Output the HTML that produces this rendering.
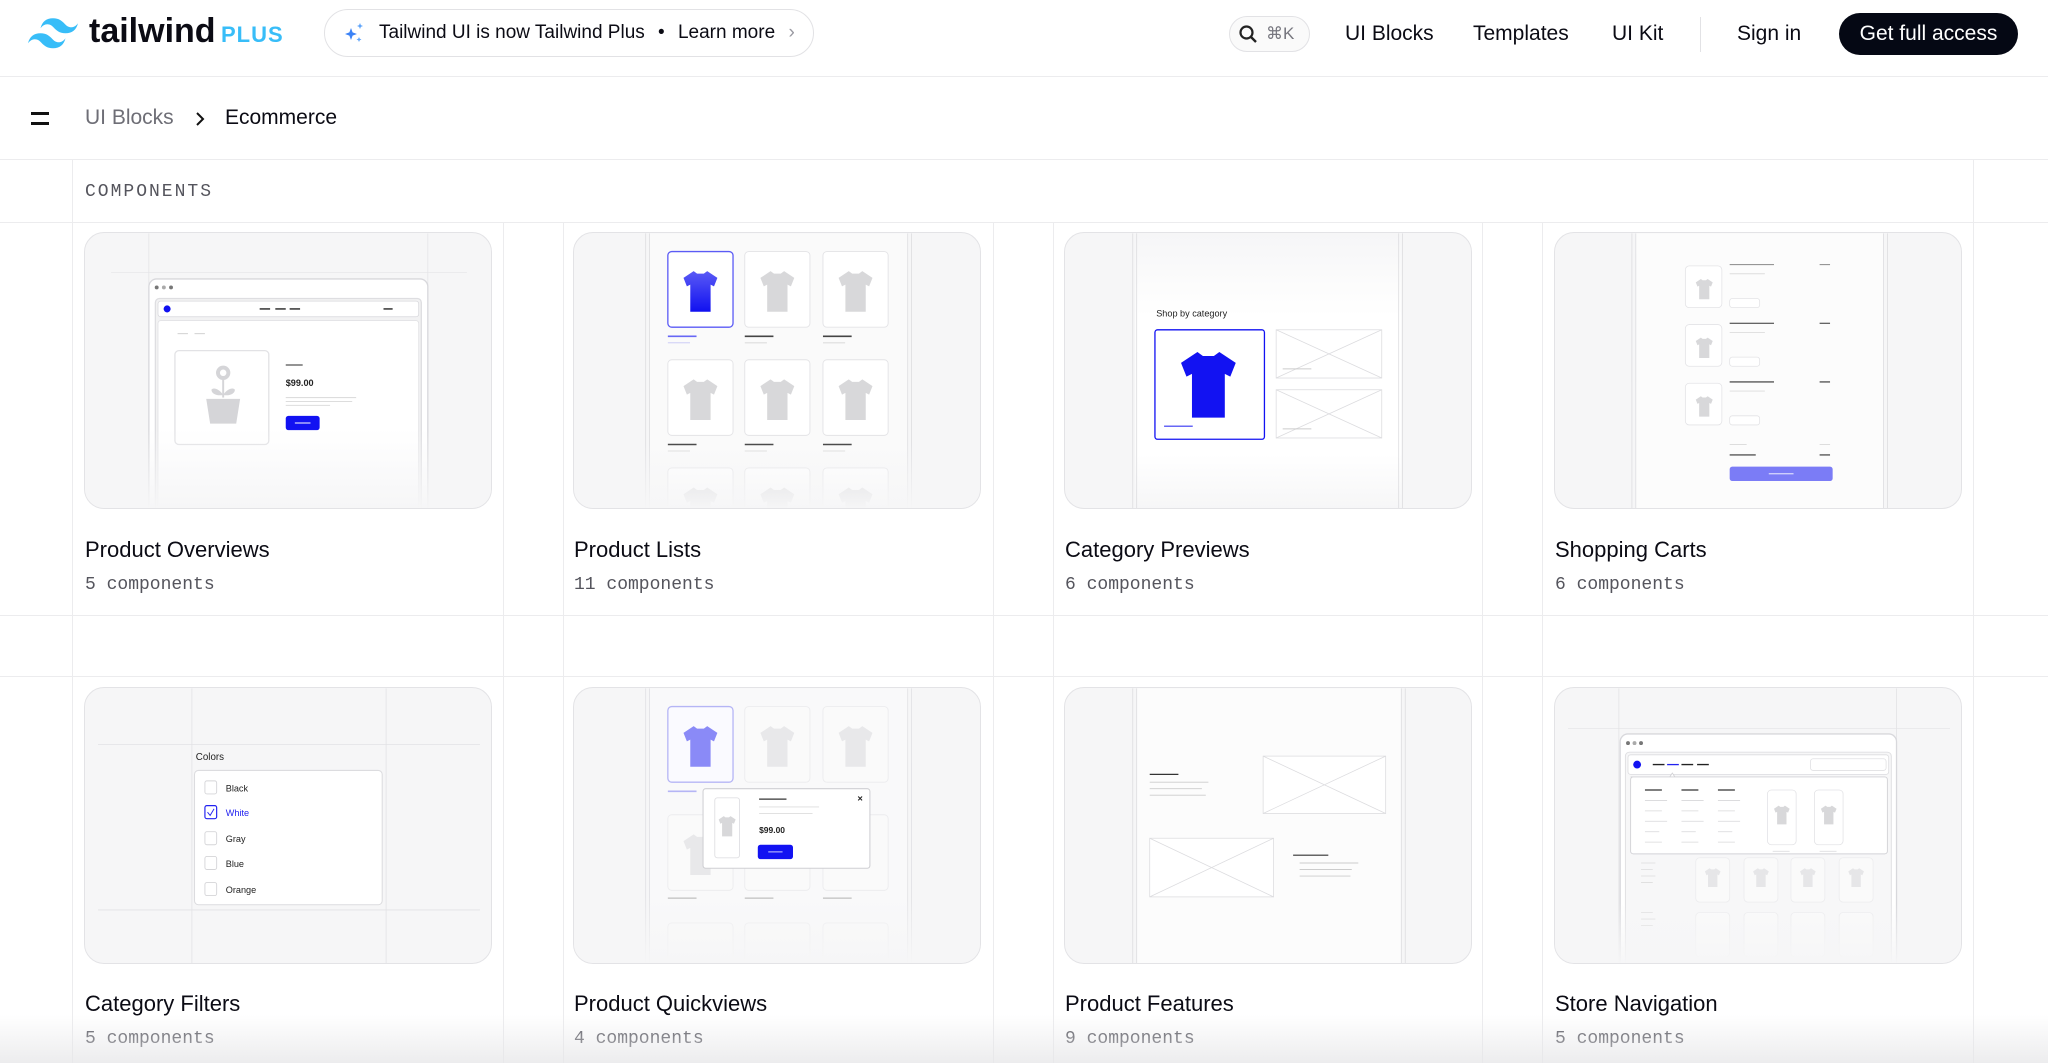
<!DOCTYPE html>
<html><head><meta charset="utf-8">
<style>
*{box-sizing:border-box;margin:0;padding:0}
html,body{width:2048px;height:1063px;overflow:hidden;background:#fff;font-family:"Liberation Sans",sans-serif;color:#0b0b14}
.a{position:absolute}
.hl{position:absolute;left:0;width:2048px;height:1px;background:#ececee}
.vl{position:absolute;width:1px;background:#ececee}
.card{position:absolute;width:408px;height:277px;border:1px solid #e3e3e6;border-radius:20px;background:#f6f6f7;overflow:hidden}
.card svg{position:absolute;left:0;top:0}
.t{position:absolute;font-size:22px;color:#0b0b14}
.c{position:absolute;font-family:"Liberation Mono",monospace;font-size:18px;color:#55555d}
.nav{position:absolute;top:22px;font-size:21px;color:#0b0b14}
</style></head><body>

<!-- header -->
<svg class="a" style="left:28px;top:18px" width="50" height="31" viewBox="0 0 54 33"><path fill="#38bdf8" d="M27 0c-7.2 0-11.7 3.6-13.5 10.8 2.7-3.6 5.850-4.950 9.45-4.05 2.054.513 3.522 2.004 5.147 3.653C30.744 13.09 33.808 16.2 40.5 16.2c7.2 0 11.7-3.6 13.5-10.8-2.7 3.6-5.85 4.95-9.45 4.05-2.054-.513-3.522-2.004-5.147-3.653C36.756 3.11 33.692 0 27 0zM13.5 16.2C6.3 16.2 1.8 19.8 0 27c2.7-3.6 5.85-4.95 9.45-4.05 2.054.514 3.522 2.004 5.147 3.653C17.244 29.29 20.308 32.4 27 32.4c7.2 0 11.7-3.6 13.5-10.8-2.7 3.6-5.85 4.95-9.45 4.05-2.054-.513-3.522-2.004-5.147-3.653C23.256 19.31 20.192 16.2 13.5 16.2z"/></svg>
<div class="a" style="left:89px;top:12px;font-size:34px;font-weight:bold;letter-spacing:0px;color:#0b0b14">tailwind</div>
<div class="a" style="left:221px;top:22px;font-size:22px;font-weight:bold;letter-spacing:1px;color:#38bdf8">PLUS</div>

<div class="a" style="left:324px;top:9px;width:490px;height:48px;border:1px solid #e2e2e5;border-radius:24px"></div>
<svg class="a" style="left:343px;top:22px" width="24" height="24" viewBox="0 0 24 24"><path fill="#3b82f6" d="M8 6l1.6 4.4L14 12l-4.4 1.6L8 18l-1.6-4.4L2 12l4.4-1.6z"/><path fill="#60a5fa" d="M17 1l.9 2.1L20 4l-2.1.9L17 7l-.9-2.1L14 4l2.1-.9z"/><path fill="#60a5fa" d="M16 15l.8 1.7 1.7.8-1.7.8L16 20l-.8-1.7-1.7-.8 1.7-.8z"/></svg>
<div class="a" style="left:379px;top:22px;font-size:19px;color:#0b0b14;white-space:nowrap">Tailwind UI is now Tailwind Plus <span style="margin:0 8px">•</span> Learn more <span style="color:#9a9aa2;margin-left:8px">›</span></div>

<div class="a" style="left:1229px;top:16px;width:81px;height:36px;border:1px solid #e2e2e5;border-radius:18px;background:#fafafa"></div>
<svg class="a" style="left:1238px;top:24px" width="20" height="20" viewBox="0 0 20 20"><circle cx="8.5" cy="8.5" r="6" fill="none" stroke="#222" stroke-width="2.2"/><path d="M13 13l5 5" stroke="#222" stroke-width="2.4"/></svg>
<div class="a" style="left:1266px;top:24px;font-size:17px;color:#77777f">⌘K</div>
<div class="nav" style="left:1345px">UI Blocks</div>
<div class="nav" style="left:1473px">Templates</div>
<div class="nav" style="left:1612px">UI Kit</div>
<div class="vl" style="left:1700px;top:17px;height:35px;background:#e2e2e5"></div>
<div class="nav" style="left:1737px">Sign in</div>
<div class="a" style="left:1839px;top:13px;width:179px;height:42px;border-radius:21px;background:#050814;color:#fff;font-size:21px;text-align:center;line-height:42px">Get full access</div>
<div class="hl" style="top:76px"></div>

<!-- breadcrumb -->
<div class="a" style="left:31px;top:112px;width:18px;height:2.5px;background:#111"></div>
<div class="a" style="left:31px;top:122px;width:18px;height:2.5px;background:#111"></div>
<div class="a" style="left:85px;top:106px;font-size:21px;color:#6e6e76">UI Blocks</div>
<svg class="a" style="left:194px;top:111px" width="12" height="16" viewBox="0 0 12 16"><path d="M3 2l6 6-6 6" fill="none" stroke="#111" stroke-width="2"/></svg>
<div class="a" style="left:225px;top:106px;font-size:21px;color:#0b0b14">Ecommerce</div>
<div class="hl" style="top:159px"></div>

<div class="a" style="left:85px;top:182px;font-family:'Liberation Mono',monospace;font-size:18px;letter-spacing:2px;color:#55555d">COMPONENTS</div>
<div class="hl" style="top:222px"></div>
<div class="hl" style="top:615px"></div>
<div class="hl" style="top:676px"></div>

<div class="vl" style="left:72px;top:159px;height:904px"></div>
<div class="vl" style="left:503px;top:222px;height:841px"></div>
<div class="vl" style="left:563px;top:222px;height:841px"></div>
<div class="vl" style="left:993px;top:222px;height:841px"></div>
<div class="vl" style="left:1053px;top:222px;height:841px"></div>
<div class="vl" style="left:1482px;top:222px;height:841px"></div>
<div class="vl" style="left:1542px;top:222px;height:841px"></div>
<div class="vl" style="left:1973px;top:159px;height:904px"></div>

<!-- Card 1: Product Overviews -->
<div class="card" style="left:84px;top:232px">
<svg width="408" height="277" viewBox="0 0 313 212">
<line x1="49" y1="0" x2="49" y2="212" stroke="#e4e4e7" stroke-width=".6"/><line x1="263" y1="0" x2="263" y2="212" stroke="#e4e4e7" stroke-width=".6"/>
<line x1="20" y1="30" x2="293" y2="30" stroke="#e4e4e7" stroke-width=".5"/>
<rect x="49" y="35" width="214" height="190" rx="6" fill="#fff" stroke="#d8d8dc"/>
<circle cx="55" cy="41.5" r="1.5" fill="#777"/><circle cx="60.5" cy="41.5" r="1.5" fill="#aaa"/><circle cx="66" cy="41.5" r="1.5" fill="#777"/>
<rect x="54" y="50" width="204" height="200" rx="3" fill="#f2f2f3" stroke="#dedee1"/>
<rect x="56" y="52" width="200" height="12" rx="2" fill="#fff" stroke="#d8d8dc" stroke-width=".6"/>
<circle cx="63" cy="58" r="2.7" fill="#1010f0"/>
<path d="M134 58h8M146 58h8M157 58h8M229 58h7" stroke="#222" stroke-width="1"/>
<rect x="56" y="67" width="200" height="160" rx="2" fill="#fff" stroke="#e0e0e3" stroke-width=".6"/>
<path d="M71 77h8M84 77h8" stroke="#ccc" stroke-width=".6"/>
<rect x="69" y="90" width="72" height="72" rx="3" fill="#fff" stroke="#e2e2e5"/>
<circle cx="106" cy="107" r="4" fill="none" stroke="#d5d5d8" stroke-width="3"/>
<path d="M106 112v14" stroke="#d5d5d8" stroke-width="1.5"/><path d="M106 124c-3-5-8-6-9-4 0 3 4 5 9 4zM106 124c3-5 8-6 9-4 0 3-4 5-9 4z" fill="#d5d5d8"/>
<path d="M93 127h26l-3 19h-20z" fill="#d5d5d8"/>
<path d="M154 101h13" stroke="#555" stroke-width="1"/>
<text x="154" y="117" font-family="Liberation Sans" font-weight="bold" font-size="7" fill="#222">$99.00</text>
<path d="M154 126h54M154 129h51M154 132h34" stroke="#ddd" stroke-width=".8"/>
<rect x="154" y="140" width="26" height="11" rx="2" fill="#1212f2"/><path d="M161 145.5h12" stroke="#fff" stroke-width=".8"/>
<rect x="0" y="150" width="313" height="62" fill="url(#f1)"/>
<defs><linearGradient id="f1" x1="0" y1="0" x2="0" y2="1"><stop offset="0" stop-color="#f6f6f7" stop-opacity="0"/><stop offset="1" stop-color="#f6f6f7"/></linearGradient></defs>
</svg></div>
<div class="t" style="left:85px;top:537px">Product Overviews</div>
<div class="c" style="left:85px;top:575px">5 components</div>

<!-- Card 2: Product Lists -->
<div class="card" style="left:573px;top:232px">
<svg width="408" height="277" viewBox="0 0 313 212">
<defs><linearGradient id="f2" x1="0" y1="0" x2="0" y2="1"><stop offset="0" stop-color="#f6f6f7" stop-opacity="0"/><stop offset="1" stop-color="#f6f6f7"/></linearGradient>
<linearGradient id="b2" x1="0" y1="0" x2="0" y2="1"><stop offset="0" stop-color="#5a5af5"/><stop offset="1" stop-color="#1010f0"/></linearGradient></defs>
<rect x="58" y="0" width="198" height="212" fill="#fafafa"/>
<path d="M55 0v212M58 0v212M256 0v212M259 0v212" stroke="#dcdcdf" stroke-width=".6"/>
<g stroke="#e3e3e6" fill="#fff" stroke-width=".7">
<rect x="131" y="14" width="50" height="58" rx="3"/><rect x="191" y="14" width="50" height="58" rx="3"/>
<rect x="72" y="97" width="50" height="58" rx="3"/><rect x="131" y="97" width="50" height="58" rx="3"/><rect x="191" y="97" width="50" height="58" rx="3"/>
<rect x="72" y="180" width="50" height="58" rx="3"/><rect x="131" y="180" width="50" height="58" rx="3"/><rect x="191" y="180" width="50" height="58" rx="3"/></g>
<rect x="72" y="14" width="50" height="58" rx="3" fill="#fff" stroke="#5b5bf5" stroke-width="1"/>
<path transform="translate(84,29) scale(1.3)" d="M6 0L8 1.5h4L14 0l6 4-2 5-2-1v16H4V8L2 9 0 4z" fill="url(#b2)"/>
<g fill="#d8d8da">
<path transform="translate(143,29) scale(1.3)" d="M6 0L8 1.5h4L14 0l6 4-2 5-2-1v16H4V8L2 9 0 4z"/>
<path transform="translate(203,29) scale(1.3)" d="M6 0L8 1.5h4L14 0l6 4-2 5-2-1v16H4V8L2 9 0 4z"/>
<path transform="translate(84,112) scale(1.3)" d="M6 0L8 1.5h4L14 0l6 4-2 5-2-1v16H4V8L2 9 0 4z"/>
<path transform="translate(143,112) scale(1.3)" d="M6 0L8 1.5h4L14 0l6 4-2 5-2-1v16H4V8L2 9 0 4z"/>
<path transform="translate(203,112) scale(1.3)" d="M6 0L8 1.5h4L14 0l6 4-2 5-2-1v16H4V8L2 9 0 4z"/>
<path transform="translate(84,195) scale(1.3)" d="M6 0L8 1.5h4L14 0l6 4-2 5-2-1v16H4V8L2 9 0 4z"/>
<path transform="translate(143,195) scale(1.3)" d="M6 0L8 1.5h4L14 0l6 4-2 5-2-1v16H4V8L2 9 0 4z"/>
<path transform="translate(203,195) scale(1.3)" d="M6 0L8 1.5h4L14 0l6 4-2 5-2-1v16H4V8L2 9 0 4z"/></g>
<path d="M72 79h22" stroke="#6767f5" stroke-width="1.2"/><path d="M72 84h17" stroke="#c5c5f5" stroke-width=".6"/>
<path d="M131 79h22M191 79h22M72 162h22M131 162h22M191 162h22" stroke="#444" stroke-width="1.2"/>
<path d="M131 84h17M191 84h17M72 167h17M131 167h17M191 167h17" stroke="#ddd" stroke-width=".8"/>
<rect x="0" y="160" width="313" height="52" fill="url(#f2)"/>
</svg></div>
<div class="t" style="left:574px;top:537px">Product Lists</div>
<div class="c" style="left:574px;top:575px">11 components</div>

<!-- Card 3: Category Previews -->
<div class="card" style="left:1064px;top:232px">
<svg width="408" height="277" viewBox="0 0 313 212">
<defs><linearGradient id="f3" x1="0" y1="0" x2="0" y2="1"><stop offset="0" stop-color="#f6f6f7"/><stop offset=".3" stop-color="#fff"/><stop offset=".8" stop-color="#fff"/><stop offset="1" stop-color="#f6f6f7"/></linearGradient></defs>
<rect x="54" y="0" width="204" height="212" fill="url(#f3)"/>
<path d="M52 0v212M55 0v212M256 0v212M259 0v212" stroke="#dcdcdf" stroke-width=".6"/>
<text x="70" y="64" font-family="Liberation Sans" font-size="7" fill="#222">Shop by category</text>
<rect x="69" y="74" width="84" height="84" rx="2" fill="#fff" stroke="#1212f2" stroke-width="1"/>
<path transform="translate(89,91) scale(2.1)" d="M6 0L8 1.5h4L14 0l6 4-2 5-2-1v16H4V8L2 9 0 4z" fill="#1212f2"/>
<path d="M76 148h22" stroke="#6767f5" stroke-width="1.2"/>
<g stroke="#dcdcdf" stroke-width=".6" fill="#fff"><rect x="162" y="74" width="81" height="37"/><rect x="162" y="120" width="81" height="37"/>
<path d="M162 74l81 37M243 74l-81 37M162 120l81 37M243 120l-81 37" fill="none"/></g>
<path d="M167 104h22M167 150h22" stroke="#ccc" stroke-width=".8"/>
</svg></div>
<div class="t" style="left:1065px;top:537px">Category Previews</div>
<div class="c" style="left:1065px;top:575px">6 components</div>

<!-- Card 4: Shopping Carts -->
<div class="card" style="left:1554px;top:232px">
<svg width="408" height="277" viewBox="0 0 313 212">
<rect x="62" y="0" width="190" height="212" fill="#fcfcfc"/>
<path d="M59 0v212M62 0v212M252 0v212M255 0v212" stroke="#dcdcdf" stroke-width=".6"/>
<g fill="#fff" stroke="#e3e3e6" stroke-width=".6">
<rect x="100" y="25" width="28" height="32" rx="3"/><rect x="100" y="70" width="28" height="32" rx="3"/><rect x="100" y="115" width="28" height="32" rx="3"/>
<rect x="134" y="50" width="23" height="7" rx="2"/><rect x="134" y="95" width="23" height="7" rx="2"/><rect x="134" y="140" width="23" height="7" rx="2"/></g>
<g fill="#d8d8da"><path transform="translate(108,35) scale(.65)" d="M6 0L8 1.5h4L14 0l6 4-2 5-2-1v16H4V8L2 9 0 4z"/><path transform="translate(108,80) scale(.65)" d="M6 0L8 1.5h4L14 0l6 4-2 5-2-1v16H4V8L2 9 0 4z"/><path transform="translate(108,125) scale(.65)" d="M6 0L8 1.5h4L14 0l6 4-2 5-2-1v16H4V8L2 9 0 4z"/></g>
<path d="M134 24h34M203 24h8" stroke="#888" stroke-width=".7"/>
<path d="M134 69h34M203 69h8M134 114h34M203 114h8M134 170h20M203 170h8" stroke="#333" stroke-width=".8"/>
<path d="M134 31h27M134 76h27M134 121h27M134 162h13M203 162h8" stroke="#ddd" stroke-width=".7"/>
<rect x="134" y="179" width="79" height="11" rx="2" fill="#7b7cf6"/><path d="M164 184.5h19" stroke="#fff" stroke-width=".7"/>
</svg></div>
<div class="t" style="left:1555px;top:537px">Shopping Carts</div>
<div class="c" style="left:1555px;top:575px">6 components</div>

<!-- Card 5: Category Filters -->
<div class="card" style="left:84px;top:687px">
<svg width="408" height="277" viewBox="0 0 313 212">
<path d="M82 0v212M231 0v212" stroke="#e2e2e5" stroke-width=".6"/><path d="M10 43h293M10 170h293" stroke="#e2e2e5" stroke-width=".6"/>
<text x="85" y="55" font-family="Liberation Sans" font-size="7.5" fill="#222">Colors</text>
<rect x="84" y="63" width="144" height="103" rx="3" fill="#fff" stroke="#dcdcdf" stroke-width=".8"/>
<g fill="#fff" stroke="#d5d5d8" stroke-width=".7"><rect x="92" y="71" width="9" height="10" rx="1.5"/><rect x="92" y="110" width="9" height="10" rx="1.5"/><rect x="92" y="129" width="9" height="10" rx="1.5"/><rect x="92" y="149" width="9" height="10" rx="1.5"/></g>
<rect x="92" y="90" width="9" height="10" rx="1.5" fill="#fff" stroke="#2222f0" stroke-width=".9"/><path d="M94 95l2 2.5 3-5" fill="none" stroke="#2222f0" stroke-width=".7"/>
<g font-family="Liberation Sans" font-size="7" fill="#222"><text x="108" y="79">Black</text><text x="108" y="98" fill="#2222f0">White</text><text x="108" y="118">Gray</text><text x="108" y="137">Blue</text><text x="108" y="157">Orange</text></g>
</svg></div>
<div class="t" style="left:85px;top:991px">Category Filters</div>
<div class="c" style="left:85px;top:1029px">5 components</div>

<!-- Card 6: Product Quickviews -->
<div class="card" style="left:573px;top:687px">
<svg width="408" height="277" viewBox="0 0 313 212">
<defs><linearGradient id="f6" x1="0" y1="0" x2="0" y2="1"><stop offset="0" stop-color="#f6f6f7" stop-opacity="0"/><stop offset="1" stop-color="#f6f6f7"/></linearGradient></defs>
<rect x="58" y="0" width="198" height="212" fill="#f9f9fa"/>
<path d="M55 0v212M58 0v212M256 0v212M259 0v212" stroke="#e0e0e3" stroke-width=".6"/>
<g stroke="#ececee" fill="#fafafa" stroke-width=".7">
<rect x="131" y="14" width="50" height="58" rx="3"/><rect x="191" y="14" width="50" height="58" rx="3"/>
<rect x="72" y="97" width="50" height="58" rx="3"/><rect x="131" y="97" width="50" height="58" rx="3"/><rect x="191" y="97" width="50" height="58" rx="3"/>
<rect x="72" y="180" width="50" height="58" rx="3"/><rect x="131" y="180" width="50" height="58" rx="3"/><rect x="191" y="180" width="50" height="58" rx="3"/></g>
<rect x="72" y="14" width="50" height="58" rx="3" fill="#fafaff" stroke="#b5b5f5" stroke-width="1"/>
<path transform="translate(84,29) scale(1.3)" d="M6 0L8 1.5h4L14 0l6 4-2 5-2-1v16H4V8L2 9 0 4z" fill="#8a8af7"/>
<g fill="#e8e8ea"><path transform="translate(143,29) scale(1.3)" d="M6 0L8 1.5h4L14 0l6 4-2 5-2-1v16H4V8L2 9 0 4z"/><path transform="translate(203,29) scale(1.3)" d="M6 0L8 1.5h4L14 0l6 4-2 5-2-1v16H4V8L2 9 0 4z"/><path transform="translate(84,112) scale(1.3)" d="M6 0L8 1.5h4L14 0l6 4-2 5-2-1v16H4V8L2 9 0 4z"/></g>
<path d="M72 161h22M131 161h22M191 161h22" stroke="#ccc" stroke-width="1.2"/>
<path d="M72 79h22" stroke="#b5b5f5" stroke-width="1.2"/>
<rect x="99" y="77" width="128" height="61" rx="2" fill="#fff" stroke="#cfcfd3" stroke-width=".8"/>
<rect x="108" y="84" width="19" height="46" rx="2" fill="#fff" stroke="#e0e0e3" stroke-width=".7"/>
<path transform="translate(111,98) scale(.65)" d="M6 0L8 1.5h4L14 0l6 4-2 5-2-1v16H4V8L2 9 0 4z" fill="#d8d8da"/>
<path d="M142 85h21" stroke="#333" stroke-width=".9"/><path d="M142 91h46M142 96h41" stroke="#ddd" stroke-width=".7"/>
<path d="M218 83l3 3M221 83l-3 3" stroke="#222" stroke-width=".8"/>
<text x="142" y="111" font-family="Liberation Sans" font-weight="bold" font-size="6.5" fill="#222">$99.00</text>
<rect x="141" y="120" width="27" height="11" rx="2" fill="#1212f2"/><path d="M149 125.5h11" stroke="#fff" stroke-width=".6"/>
<rect x="0" y="160" width="313" height="52" fill="url(#f6)"/>
</svg></div>
<div class="t" style="left:574px;top:991px">Product Quickviews</div>
<div class="c" style="left:574px;top:1029px">4 components</div>

<!-- Card 7: Product Features -->
<div class="card" style="left:1064px;top:687px">
<svg width="408" height="277" viewBox="0 0 313 212">
<rect x="55" y="0" width="203" height="212" fill="#fcfcfc"/>
<path d="M52 0v212M55 0v212M258 0v212M261 0v212" stroke="#dcdcdf" stroke-width=".6"/>
<path d="M65 66h22M175 128h27" stroke="#333" stroke-width=".9"/>
<path d="M65 72h45M65 77h40M65 82h43M180 134h45M180 139h40M180 144h39" stroke="#ccc" stroke-width=".7"/>
<g stroke="#dcdcdf" stroke-width=".6" fill="#fff"><rect x="152" y="52" width="94" height="44"/><rect x="65" y="115" width="95" height="45"/>
<path d="M152 52l94 44M246 52l-94 44M65 115l95 45M160 115l-95 45" fill="none"/></g>
</svg></div>
<div class="t" style="left:1065px;top:991px">Product Features</div>
<div class="c" style="left:1065px;top:1029px">9 components</div>

<!-- Card 8: Store Navigation -->
<div class="card" style="left:1554px;top:687px">
<svg width="408" height="277" viewBox="0 0 313 212">
<defs><linearGradient id="f8" x1="0" y1="0" x2="0" y2="1"><stop offset="0" stop-color="#f6f6f7" stop-opacity="0"/><stop offset="1" stop-color="#f6f6f7"/></linearGradient></defs>
<path d="M49 0v212M262 0v212" stroke="#e2e2e5" stroke-width=".6"/><path d="M10 31h293" stroke="#e2e2e5" stroke-width=".5"/>
<rect x="50" y="35" width="212" height="190" rx="6" fill="#fff" stroke="#d8d8dc"/>
<circle cx="56" cy="42" r="1.5" fill="#777"/><circle cx="61" cy="42" r="1.5" fill="#aaa"/><circle cx="66" cy="42" r="1.5" fill="#777"/>
<rect x="54" y="49" width="204" height="200" rx="3" fill="#f7f7f8" stroke="#dedee1" stroke-width=".7"/>
<rect x="56" y="51" width="200" height="15" rx="2" fill="#fff" stroke="#dcdcdf" stroke-width=".6"/>
<circle cx="63" cy="58.5" r="3" fill="#1212f2"/>
<path d="M75 58.5h9M97 58.5h9M109 58.5h9" stroke="#222" stroke-width="1"/><path d="M86 58.5h9" stroke="#2222f0" stroke-width="1"/>
<rect x="196" y="54" width="58" height="9" rx="2" fill="#fff" stroke="#e0e0e3" stroke-width=".6"/>
<g fill="#fafafa" stroke="#ececee" stroke-width=".6"><rect x="108" y="130" width="26" height="34" rx="3"/><rect x="145" y="130" width="26" height="34" rx="3"/><rect x="181" y="130" width="26" height="34" rx="3"/><rect x="218" y="130" width="26" height="34" rx="3"/><rect x="108" y="172" width="26" height="34" rx="3"/><rect x="145" y="172" width="26" height="34" rx="3"/><rect x="181" y="172" width="26" height="34" rx="3"/><rect x="218" y="172" width="26" height="34" rx="3"/></g>
<g fill="#e6e6e8"><path transform="translate(115,138) scale(.6)" d="M6 0L8 1.5h4L14 0l6 4-2 5-2-1v16H4V8L2 9 0 4z"/><path transform="translate(152,138) scale(.6)" d="M6 0L8 1.5h4L14 0l6 4-2 5-2-1v16H4V8L2 9 0 4z"/><path transform="translate(188,138) scale(.6)" d="M6 0L8 1.5h4L14 0l6 4-2 5-2-1v16H4V8L2 9 0 4z"/><path transform="translate(225,138) scale(.6)" d="M6 0L8 1.5h4L14 0l6 4-2 5-2-1v16H4V8L2 9 0 4z"/></g>
<path d="M66 134h11M66 139h9M66 144h11M66 149h9M66 172h9M66 177h11M66 182h9" stroke="#ddd" stroke-width=".6"/>
<path d="M58 68h195a2 2 0 0 1 2 2v55a2 2 0 0 1-2 2H60a2 2 0 0 1-2-2V70a2 2 0 0 1 2-2zM88 68l2-3 2 3" fill="#fff" stroke="#d2d2d6" stroke-width=".7"/>
<path d="M69 78h13M97 78h13M125 78h13" stroke="#333" stroke-width=".9"/>
<g stroke="#d8d8da" stroke-width=".6"><path d="M69 86h17M97 86h17M125 86h17M69 94h13M97 94h13M125 94h13M69 102h17M97 102h17M125 102h17M69 110h11M97 110h11M125 110h11M69 118h13M97 118h13M125 118h13M167 125h13M203 125h13"/></g>
<g fill="#fff" stroke="#e3e3e6" stroke-width=".6"><rect x="163" y="78" width="22" height="42" rx="3"/><rect x="199" y="78" width="22" height="42" rx="3"/></g>
<g fill="#d8d8da"><path transform="translate(168,90) scale(.6)" d="M6 0L8 1.5h4L14 0l6 4-2 5-2-1v16H4V8L2 9 0 4z"/><path transform="translate(204,90) scale(.6)" d="M6 0L8 1.5h4L14 0l6 4-2 5-2-1v16H4V8L2 9 0 4z"/></g>
<rect x="0" y="165" width="313" height="47" fill="url(#f8)"/>
</svg></div>
<div class="t" style="left:1555px;top:991px">Store Navigation</div>
<div class="c" style="left:1555px;top:1029px">5 components</div>

<div class="a" style="left:0;top:1015px;width:2048px;height:48px;background:linear-gradient(to bottom,rgba(235,235,237,0),rgba(230,230,232,.75))"></div>
</body></html>
